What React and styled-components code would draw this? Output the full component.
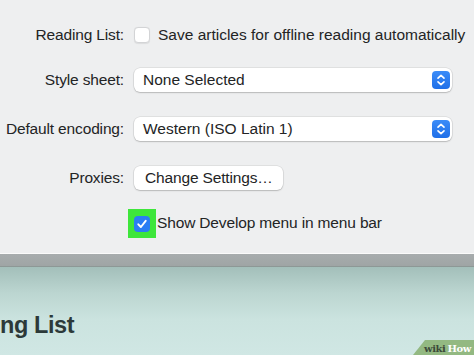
import React from "react";
import styled, { createGlobalStyle } from "styled-components";

const GlobalStyle = createGlobalStyle`
  html, body {
    margin: 0;
    padding: 0;
    overflow: hidden;
  }
  body {
    font-family: "Liberation Sans", Arial, sans-serif;
    color: #232425;
  }
`;

const Page = styled.div`
  width: 474px;
  height: 355px;
  display: flex;
  flex-direction: column;
  overflow: hidden;
`;

const Panel = styled.div`
  height: 253px;
  background: #eeeff0;
  padding-top: 23px;
  box-sizing: border-box;
`;

const Row = styled.div`
  display: grid;
  grid-template-columns: 124px auto;
  grid-template-rows: 24px;
  column-gap: 10px;
  align-items: center;
  height: 24px;
  margin-top: ${(p) => p.$top || 0}px;
  font-size: 15.5px;
`;

const Label = styled.div`
  text-align: right;
  white-space: nowrap;
  letter-spacing: -0.15px;
`;

const Field = styled.div`
  display: flex;
  align-items: center;
  height: 24px;
  white-space: nowrap;
`;

const Box = styled.span`
  width: 16px;
  height: 16px;
  box-sizing: border-box;
  border-radius: 4px;
  flex: none;
  display: flex;
  align-items: center;
  justify-content: center;
  background: ${(p) => (p.$checked ? "#2b7df4" : "#ffffff")};
  border: ${(p) => (p.$checked ? "none" : "1px solid #d3d4d6")};
  box-shadow: ${(p) => (p.$checked ? "none" : "0 0.5px 1px rgba(0,0,0,0.08)")};
`;

const Highlight = styled.span`
  display: flex;
  align-items: center;
  justify-content: center;
  width: 28px;
  height: 29px;
  flex: none;
  margin-left: -6px;
  padding-top: 1px;
  box-sizing: border-box;
  background: #3ee63b;
`;

const CheckText = styled.span`
  margin-left: ${(p) => p.$gap}px;
  letter-spacing: ${(p) => p.$track || 0}px;
`;

const Select = styled.div`
  width: 318px;
  height: 24px;
  box-sizing: border-box;
  background: #ffffff;
  border-radius: 6px;
  box-shadow: 0 0 0 0.5px rgba(0, 0, 0, 0.12), 0 1px 1.5px rgba(0, 0, 0, 0.18);
  display: flex;
  align-items: center;
  justify-content: space-between;
  padding: 0 2px 0 9px;
`;

const Stepper = styled.span`
  width: 18px;
  height: 18px;
  border-radius: 4px;
  background: linear-gradient(#3b8cf8, #1f6fe8);
  display: flex;
  align-items: center;
  justify-content: center;
`;

const Button = styled.div`
  height: 24px;
  box-sizing: border-box;
  padding: 0 10px 0 11px;
  background: #ffffff;
  border-radius: 6px;
  box-shadow: 0 0 0 0.5px rgba(0, 0, 0, 0.12), 0 1px 1.5px rgba(0, 0, 0, 0.18);
  display: flex;
  align-items: center;
  letter-spacing: -0.15px;
`;

const Edge = styled.div`
  height: 1px;
  background: #fafafa;
`;

const Band = styled.div`
  height: 12px;
  background: linear-gradient(#a7acad, #9fa5a5);
  border-bottom: 1px solid #8d9896;
`;

const Lower = styled.div`
  flex: 1;
  position: relative;
  background: linear-gradient(#a3bfba 0%, #bcd6d1 30%, #cbe3df 60%, #d0e7e4 100%);
  padding-top: 44px;
  box-sizing: border-box;
`;

const Heading = styled.div`
  font-size: 23.5px;
  line-height: 28px;
  font-weight: bold;
  letter-spacing: -0.4px;
  color: #2c3939;
  white-space: nowrap;
`;

const Badge = styled.div`
  position: absolute;
  right: 0;
  bottom: 0;
  width: 61px;
  height: 15px;
  background: #93b982;
  clip-path: polygon(12px 0, 100% 0, 100% 100%, 0 100%);
  display: flex;
  align-items: center;
  justify-content: flex-end;
  padding: 1px 3px 0 0;
  box-sizing: border-box;
  font-family: "DejaVu Serif", "Liberation Serif", serif;
  font-weight: bold;
  font-size: 10px;
  letter-spacing: -0.4px;
`;

const Wiki = styled.span`
  color: #3c4a3a;
`;

const How = styled.span`
  color: #ffffff;
  margin-left: 2px;
`;

const StepIcon = () => (
  <svg width="10" height="14" viewBox="0 0 10 14">
    <path
      d="M2 5.2 L5 2.3 L8 5.2 M2 8.8 L5 11.7 L8 8.8"
      fill="none"
      stroke="#ffffff"
      strokeWidth="1.6"
      strokeLinecap="round"
      strokeLinejoin="round"
    />
  </svg>
);

const Tick = () => (
  <svg width="12" height="12" viewBox="0 0 12 12">
    <path
      d="M2.3 6.3 L4.9 9 L9.7 2.8"
      fill="none"
      stroke="#ffffff"
      strokeWidth="1.9"
      strokeLinecap="round"
      strokeLinejoin="round"
    />
  </svg>
);

const PopUp = ({ value }) => (
  <Select>
    <span>{value}</span>
    <Stepper>
      <StepIcon />
    </Stepper>
  </Select>
);

const App = () => {
  return (
    <Page>
      <GlobalStyle />
      <Panel>
        <Row>
          <Label>Reading List:</Label>
          <Field>
            <Box />
            <CheckText $gap={8}>Save articles for offline reading automatically</CheckText>
          </Field>
        </Row>
        <Row $top={21}>
          <Label>Style sheet:</Label>
          <Field>
            <PopUp value="None Selected" />
          </Field>
        </Row>
        <Row $top={25}>
          <Label>Default encoding:</Label>
          <Field>
            <PopUp value="Western (ISO Latin 1)" />
          </Field>
        </Row>
        <Row $top={25}>
          <Label>Proxies:</Label>
          <Field>
            <Button>Change Settings…</Button>
          </Field>
        </Row>
        <Row $top={21}>
          <Label />
          <Field>
            <Highlight>
              <Box $checked>
                <Tick />
              </Box>
            </Highlight>
            <CheckText $gap={1} $track={-0.15}>Show Develop menu in menu bar</CheckText>
          </Field>
        </Row>
      </Panel>
      <Edge />
      <Band />
      <Lower>
        <Heading>ng List</Heading>
        <Badge>
          <Wiki>wiki</Wiki>
          <How>How</How>
        </Badge>
      </Lower>
    </Page>
  );
};

export default App;
